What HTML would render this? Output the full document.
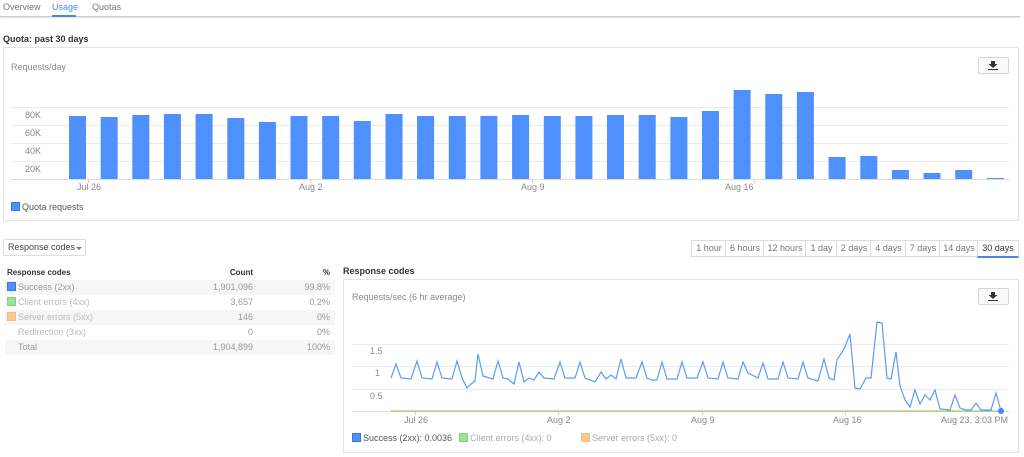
<!DOCTYPE html>
<html><head><style>
body{margin:0;width:1024px;height:457px;background:#fff;font-family:"Liberation Sans",sans-serif;font-size:9px;color:#444;position:relative;overflow:hidden}
.a{position:absolute}
.card{position:absolute;border:1px solid #e3e3e3;background:#fff}
.dl{position:absolute;width:29px;height:15px;border:1px solid #d6d6d6;border-radius:2px;background:#fafafa}
.dl svg{position:absolute;left:9px;top:3px}
.row{position:absolute;left:5px;width:330px;height:15px;line-height:15px;color:#aaa}
.row .c{position:absolute;white-space:nowrap}
.sw{display:inline-block;width:7px;height:7px;border:1px solid;margin-right:2px;vertical-align:-1px}
.tb{position:absolute;top:240px;height:15px;line-height:15px;border:1px solid #ddd;border-right:none;color:#777;text-align:center;font-size:9px}
</style></head><body>
<div class="a" style="left:3px;top:2px;color:#777">Overview</div>
<div class="a" style="left:52px;top:2px;color:#4a86e8">Usage</div>
<div class="a" style="left:92px;top:2px;color:#777">Quotas</div>
<div class="a" style="left:0;top:16px;width:1020px;height:1px;background:#ccc;box-shadow:0 1px 1px #ddd"></div>
<div class="a" style="left:52px;top:15px;width:24px;height:2px;background:#4a86e8"></div>
<div class="a" style="left:3px;top:34px;font-weight:bold;color:#333">Quota: past 30 days</div>
<div class="card" style="left:3px;top:47px;width:1014px;height:172px"></div>
<div class="a" style="left:11px;top:62px;color:#888">Requests/day</div>
<div class="dl" style="left:978px;top:57px"><svg width="10" height="9"><path d="M3 0h4v3h2.5L5 7 .5 3H3z M0 8h10v1H0z" fill="#333"/></svg></div>
<svg class="a" style="left:0;top:0" width="1024" height="230">
<g stroke="#ebebeb" stroke-width="1"><line x1="11" y1="107.5" x2="1009" y2="107.5"/><line x1="11" y1="125.5" x2="1009" y2="125.5"/><line x1="11" y1="143.5" x2="1009" y2="143.5"/><line x1="11" y1="161.5" x2="1009" y2="161.5"/><line x1="11" y1="179.5" x2="1009" y2="179.5" stroke="#ddd"/></g>
<g fill="#888" font-size="9" font-family="Liberation Sans"><text x="25" y="118">80K</text><text x="25" y="136">60K</text><text x="25" y="154">40K</text><text x="25" y="172">20K</text>
<text x="77" y="190">Jul 26</text><text x="299" y="190">Aug 2</text><text x="521" y="190">Aug 9</text><text x="725" y="190">Aug 16</text></g>
<g stroke="#ccc"><line x1="88.5" y1="180" x2="88.5" y2="183"/><line x1="310.5" y1="180" x2="310.5" y2="183"/><line x1="532.5" y1="180" x2="532.5" y2="183"/><line x1="754.5" y1="180" x2="754.5" y2="183"/></g>
<g id="bg" fill="#4d90fe"></g>
</svg>
<div class="a" style="left:11px;top:202px;color:#555"><span class="sw" style="background:#4d90fe;border-color:#3a78e0"></span>Quota requests</div>

<div class="a" style="left:3px;top:239px;width:83px;height:17px;border:1px solid #ddd;border-radius:2px;line-height:15px;color:#444;padding-left:4px;box-sizing:border-box;white-space:nowrap">Response codes<span style="position:absolute;left:72px;top:7px;width:0;height:0;border-left:3px solid transparent;border-right:3px solid transparent;border-top:3px solid #777"></span></div>
<div class="row" style="top:265px;color:#333;font-weight:bold;font-size:8px"><span class="c" style="left:2px">Response codes</span><span class="c" style="right:82px">Count</span><span class="c" style="right:5px">%</span></div>
<div class="row" style="top:280px;background:#f6f6f6;color:#999"><span class="c" style="left:2px"><span class="sw" style="background:#4d90fe;border-color:#3a78e0"></span>Success (2xx)</span><span class="c" style="right:82px">1,901,096</span><span class="c" style="right:5px">99.8%</span></div>
<div class="row" style="top:295px;color:#bbb"><span class="c" style="left:2px"><span class="sw" style="background:#9be29b;border-color:#8c8"></span>Client errors (4xx)</span><span class="c" style="right:82px;color:#999">3,657</span><span class="c" style="right:5px;color:#999">0.2%</span></div>
<div class="row" style="top:310px;background:#f6f6f6;color:#bbb"><span class="c" style="left:2px"><span class="sw" style="background:#fcc98a;border-color:#eb9"></span>Server errors (5xx)</span><span class="c" style="right:82px;color:#999">146</span><span class="c" style="right:5px;color:#999">0%</span></div>
<div class="row" style="top:325px;color:#bbb"><span class="c" style="left:13px">Redirection (3xx)</span><span class="c" style="right:82px;color:#999">0</span><span class="c" style="right:5px;color:#999">0%</span></div>
<div class="row" style="top:340px;background:#f6f6f6;color:#999"><span class="c" style="left:13px">Total</span><span class="c" style="right:82px">1,904,899</span><span class="c" style="right:5px">100%</span></div>

<div class="tb" style="left:691px;width:34px">1 hour</div>
<div class="tb" style="left:725px;width:38px">6 hours</div>
<div class="tb" style="left:763px;width:42px">12 hours</div>
<div class="tb" style="left:805px;width:31px">1 day</div>
<div class="tb" style="left:836px;width:34px">2 days</div>
<div class="tb" style="left:870px;width:35px">4 days</div>
<div class="tb" style="left:905px;width:34px">7 days</div>
<div class="tb" style="left:939px;width:38px">14 days</div>
<div class="tb" style="left:977px;width:40px;border-right:1px solid #ddd;color:#333;border-bottom:2px solid #4a86e8">30 days</div>

<div class="a" style="left:343px;top:266px;font-weight:bold;color:#333">Response codes</div>
<div class="card" style="left:343px;top:279px;width:674px;height:172px"></div>
<div class="a" style="left:352px;top:292px;color:#888">Requests/sec (6 hr average)</div>
<div class="dl" style="left:978px;top:288px"><svg width="10" height="9"><path d="M3 0h4v3h2.5L5 7 .5 3H3z M0 8h10v1H0z" fill="#333"/></svg></div>
<svg class="a" style="left:0;top:0" width="1024" height="457">
<g stroke="#ebebeb"><line x1="352" y1="344.5" x2="1009" y2="344.5"/><line x1="352" y1="366.5" x2="1009" y2="366.5"/><line x1="352" y1="389.5" x2="1009" y2="389.5"/><line x1="352" y1="411.5" x2="1009" y2="411.5" stroke="#ddd"/></g>
<g fill="#888" font-size="9" font-family="Liberation Sans"><text x="370" y="354">1.5</text><text x="375" y="376">1</text><text x="370" y="399">0.5</text>
<text x="404" y="423">Jul 26</text><text x="547" y="423">Aug 2</text><text x="691" y="423">Aug 9</text><text x="833" y="423">Aug 16</text><text x="941" y="423">Aug 23, 3:03 PM</text></g>
<g stroke="#ccc"><line x1="415.5" y1="412" x2="415.5" y2="415"/><line x1="558.5" y1="412" x2="558.5" y2="415"/><line x1="702.5" y1="412" x2="702.5" y2="415"/><line x1="845.5" y1="412" x2="845.5" y2="415"/></g>
<line x1="391" y1="411" x2="1001" y2="411" stroke="#8bc34a" stroke-width="1"/>
<polyline id="ln" fill="none" stroke="#5b9cf8" stroke-width="1.2" points=""/>
<circle cx="1001" cy="411" r="3" fill="#4285f4"/>
</svg>
<div class="a" style="left:352px;top:433px;color:#555"><span class="sw" style="background:#4d90fe;border-color:#3a78e0"></span>Success (2xx): 0.0036</div>
<div class="a" style="left:459px;top:433px;color:#aaa"><span class="sw" style="background:#9be29b;border-color:#8c8"></span>Client errors (4xx): 0</div>
<div class="a" style="left:581px;top:433px;color:#aaa"><span class="sw" style="background:#fcc98a;border-color:#eb9"></span>Server errors (5xx): 0</div>
<script>
var tops=[116,117,115,114,114,118,122,116,116,121,114,116,116,116,115,116,116,115,115,117,111,90,94,92,157,156,170,173,170,178];
var g=document.getElementById('bg'),s='';
for(var i=0;i<30;i++){var x=69+i*31.65;s+='<rect x="'+x.toFixed(1)+'" y="'+tops[i]+'" width="17" height="'+(179-tops[i])+'"/>';}
g.innerHTML=s;
var pts=[[391,378],[396,364],[401,378],[411,379],[417,361],[422,378],[432,379],[437,362],[442,378],[452,379],[457,361],[462,378],[467,388],[471,384],[475,381],[478,354],[483,376],[493,379],[498,361],[503,378],[508,379],[514,384],[519,362],[524,382],[529,378],[534,380],[539,372],[544,378],[554,379],[560,362],[565,378],[575,378],[580,362],[585,378],[595,382],[601,372],[606,379],[611,375],[616,379],[621,359],[626,378],[636,378],[642,362],[647,378],[652,380],[657,380],[662,362],[667,379],[677,379],[682,362],[687,378],[692,378],[697,378],[703,362],[708,378],[718,379],[723,362],[728,378],[738,379],[743,362],[748,373],[758,378],[763,363],[768,379],[778,379],[783,362],[788,378],[798,379],[803,362],[808,378],[818,381],[824,359],[829,378],[834,380],[837,360],[844,349],[850,334],[855,388],[860,389],[866,378],[871,378],[877,322],[882,323],[887,378],[891,379],[896,352],[900,386],[905,400],[910,407],[915,390],[920,404],[925,395],[930,400],[935,390],[940,409],[950,410],[955,395],[960,408],[966,410],[971,410],[976,403],[981,410],[991,410],[996,393],[1001,411]];
document.getElementById('ln').setAttribute('points',pts.map(function(p){return p.join(',')}).join(' '));
</script>
</body></html>
